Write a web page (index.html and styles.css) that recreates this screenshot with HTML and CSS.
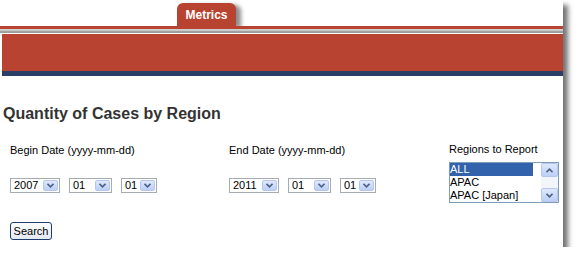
FILE: index.html
```html
<!DOCTYPE html>
<html lang="en">
  <head>
    <meta charset="UTF-8" />
    <meta name="viewport" content="width=device-width, initial-scale=1.0" />
    <title>Metrics</title>
    <link rel="stylesheet" href="styles.css">
  </head>
  <body>
    <div class="window">
      <div class="tabs">
        <a class="tab" href="#">Metrics</a>
      </div>
      <div class="rule"></div>
      <div class="banner"></div>

      <div class="content">
        <h1 class="title">Quantity of Cases by Region</h1>

        <form class="filters">
          <div class="field">
            <label class="field-label">Begin Date (yyyy-mm-dd)</label>
            <div class="combos">
              <span class="combo combo-year">
                <span class="combo-value">2007</span>
                <span class="arrow-btn">
                  <svg width="7" height="5" viewBox="0 0 7 5"><path d="M0.5 0.8 L3.5 3.8 L6.5 0.8" fill="none" stroke="#4d6185" stroke-width="1.6"/></svg>
                </span>
              </span>
              <span class="combo combo-month">
                <span class="combo-value">01</span>
                <span class="arrow-btn">
                  <svg width="7" height="5" viewBox="0 0 7 5"><path d="M0.5 0.8 L3.5 3.8 L6.5 0.8" fill="none" stroke="#4d6185" stroke-width="1.6"/></svg>
                </span>
              </span>
              <span class="combo combo-day">
                <span class="combo-value">01</span>
                <span class="arrow-btn">
                  <svg width="7" height="5" viewBox="0 0 7 5"><path d="M0.5 0.8 L3.5 3.8 L6.5 0.8" fill="none" stroke="#4d6185" stroke-width="1.6"/></svg>
                </span>
              </span>
            </div>
          </div>

          <div class="field">
            <label class="field-label">End Date (yyyy-mm-dd)</label>
            <div class="combos">
              <span class="combo combo-year">
                <span class="combo-value">2011</span>
                <span class="arrow-btn">
                  <svg width="7" height="5" viewBox="0 0 7 5"><path d="M0.5 0.8 L3.5 3.8 L6.5 0.8" fill="none" stroke="#4d6185" stroke-width="1.6"/></svg>
                </span>
              </span>
              <span class="combo combo-month">
                <span class="combo-value">01</span>
                <span class="arrow-btn">
                  <svg width="7" height="5" viewBox="0 0 7 5"><path d="M0.5 0.8 L3.5 3.8 L6.5 0.8" fill="none" stroke="#4d6185" stroke-width="1.6"/></svg>
                </span>
              </span>
              <span class="combo combo-day">
                <span class="combo-value">01</span>
                <span class="arrow-btn">
                  <svg width="7" height="5" viewBox="0 0 7 5"><path d="M0.5 0.8 L3.5 3.8 L6.5 0.8" fill="none" stroke="#4d6185" stroke-width="1.6"/></svg>
                </span>
              </span>
            </div>
          </div>

          <div class="field field-regions">
            <label class="field-label">Regions to Report</label>
            <div class="listbox">
              <ul class="listbox-options">
                <li class="selected">ALL</li>
                <li>APAC</li>
                <li>APAC [Japan]</li>
              </ul>
              <div class="scrollbar">
                <span class="scroll-btn">
                  <svg width="7" height="5" viewBox="0 0 7 5"><path d="M0.5 4.2 L3.5 1.2 L6.5 4.2" fill="none" stroke="#4d6185" stroke-width="1.6"/></svg>
                </span>
                <span class="scroll-track"></span>
                <span class="scroll-btn">
                  <svg width="7" height="5" viewBox="0 0 7 5"><path d="M0.5 0.8 L3.5 3.8 L6.5 0.8" fill="none" stroke="#4d6185" stroke-width="1.6"/></svg>
                </span>
              </div>
            </div>
          </div>
        </form>

        <button class="search-btn" type="button">Search</button>
      </div>
    </div>
  </body>
</html>
```

FILE: styles.css
```css
body {
  margin: 0;
  background: #fff;
  font-family: "Liberation Sans", Arial, sans-serif;
}

.window {
  width: 563px;
  height: 247px;
  background: #fff;
  box-shadow: 5px 5px 5px rgba(0, 0, 0, 0.55);
}

/* tab strip */
.tabs {
  height: 26px;
  padding-left: 177px;
  display: flex;
  align-items: flex-end;
  overflow: hidden;
}

.tab {
  width: 59px;
  height: 23px;
  display: flex;
  align-items: center;
  justify-content: center;
  background: #b94331;
  border-radius: 6px 6px 0 0;
  color: #fff;
  font-size: 12px;
  font-weight: bold;
  text-decoration: none;
  box-shadow: 5px 2px 4px rgba(0, 0, 0, 0.45);
}

.rule {
  height: 5px;
  border-top: 3px solid #b94331;
  background: linear-gradient(#d2d2d2 0, #c4c4c4 2px, #a2a2a2 2px, #9a9a9a 4px, #fff 4px);
}

.banner {
  height: 37px;
  margin-left: 2px;
  background: #b94331;
  border-bottom: 5px solid #2b3e66;
}

/* form */
.content {
  padding: 29px 0 0 3px;
}

.title {
  margin: 0;
  font-size: 16px;
  line-height: 18px;
  font-weight: bold;
  color: #333;
}

.filters {
  display: grid;
  grid-template-columns: 219px 220px 1fr;
  margin-top: 21px;
  padding-left: 7px;
}

.field-label {
  display: block;
  font-size: 11px;
  line-height: 13px;
  color: #000;
}

.combos {
  display: flex;
  gap: 9px;
  margin-top: 21px;
}

.combo {
  display: flex;
  box-sizing: border-box;
  height: 15px;
  padding: 1px;
  border: 1px solid #a5acb2;
  background: #fff;
  font-size: 11px;
  line-height: 11px;
}
.combo-year {
  width: 50px;
}
.combo-month {
  width: 43px;
}
.combo-day {
  width: 36px;
}

.combo-value {
  flex: 1;
  padding-left: 2px;
}

.arrow-btn,
.scroll-btn {
  display: flex;
  align-items: center;
  justify-content: center;
  box-sizing: border-box;
  border: 1px solid #b6c7ef;
  border-radius: 2px;
  background: linear-gradient(#dfe8fd, #bccff7);
}
.arrow-btn {
  width: 15px;
}

.field-regions .field-label {
  margin-top: -1px;
}

.listbox {
  display: flex;
  box-sizing: border-box;
  width: 110px;
  height: 41px;
  margin-top: 6px;
  border: 1px solid #7f9db9;
  background: #fff;
}

.listbox-options {
  width: 83px;
  margin: 0;
  padding: 0;
  list-style: none;
  font-size: 11px;
  line-height: 13px;
}
.listbox-options .selected {
  background: #3162ab;
  color: #fff;
}

.scrollbar {
  display: flex;
  flex-direction: column;
  width: 17px;
  margin-left: auto;
  background: #f2f5fc;
}
.scroll-btn {
  height: 14px;
}
.scroll-track {
  flex: 1;
}

.search-btn {
  display: block;
  width: 42px;
  height: 18px;
  margin: 19px 0 0 7px;
  padding: 0;
  border: 1px solid #1d3c6d;
  border-radius: 3px;
  background: linear-gradient(#fbfcfe, #e4e9f2);
  font-family: inherit;
  font-size: 11px;
  color: #000;
}
```
